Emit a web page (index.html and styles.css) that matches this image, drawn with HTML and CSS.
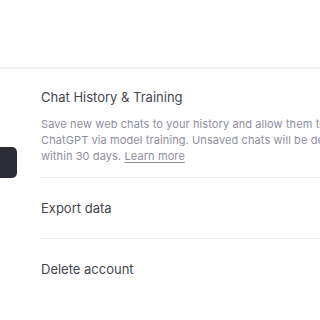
FILE: index.html
```html
<!DOCTYPE html>
<html>
<head>
<meta charset="utf-8">
<link rel="stylesheet" href="styles.css">
</head>
<body>
<div class="top"></div>
<div class="band"></div>
<div class="main">
  <div class="side"><div class="pill"></div></div>
  <div class="content">
    <div class="section first">
      <div class="title">Chat History &amp; Training</div>
      <div class="desc">Save new web chats to your history and allow them to be used to improve<br>ChatGPT via model training. Unsaved chats will be deleted from our systems<br>within 30 days. <a class="link">Learn more</a></div>
    </div>
    <div class="section row"><div class="title">Export data</div></div>
    <div class="section row"><div class="title">Delete account</div></div>
  </div>
</div>
</body>
</html>
```
FILE: styles.css
```css
html, body { margin: 0; padding: 0; background: #fff; overflow: hidden; width: 320px; height: 320px; }
body { font-family: Inter, "Noto Sans", sans-serif; }
.top { height: 67px; }
.band { height: 2px; background: #f0f0f0; }
.main { display: flex; }
.side { width: 41px; flex: none; }
.pill { margin-top: 78px; width: 17px; height: 31px; background: #2b2c36; border-radius: 0 5px 5px 0; }
.content { flex: none; width: 600px; }
.section { border-bottom: 1px solid #ececf1; }
.section:last-child { border-bottom: none; }
.first { padding: 18px 0 13px; }
.row { padding: 20px 0; }
.title { font-size: 13px; line-height: 20px; color: #45454f; }
.desc { margin-top: 9px; font-size: 11px; line-height: 16px; letter-spacing: 0.1px; color: #8e8ea0; white-space: nowrap; }
.link { color: #8e8ea0; text-decoration: underline; text-underline-offset: 2px; }
```
